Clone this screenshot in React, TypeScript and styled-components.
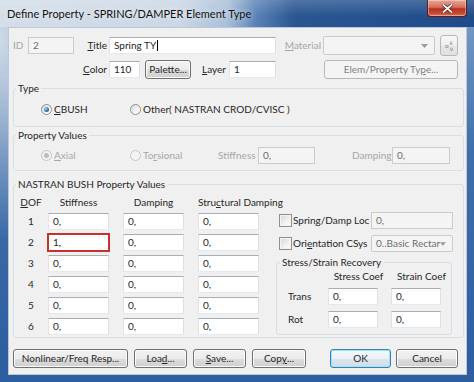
import styled, { createGlobalStyle, css } from 'styled-components';

const GlobalStyle = createGlobalStyle`
  html, body {
    margin: 0;
    padding: 0;
  }

  body {
    width: 474px;
    height: 382px;
    overflow: hidden;
    font-family: Lato, 'Noto Sans', sans-serif;
    font-size: 10px;
    line-height: 13px;
    color: #262626;
  }
`;

const DOF_ROWS = [
  { dof: '1', stiffness: '0,', damping: '0,', structural: '0,' },
  { dof: '2', stiffness: '1,', damping: '0,', structural: '0,', highlight: true },
  { dof: '3', stiffness: '0,', damping: '0,', structural: '0,' },
  { dof: '4', stiffness: '0,', damping: '0,', structural: '0,' },
  { dof: '5', stiffness: '0,', damping: '0,', structural: '0,' },
  { dof: '6', stiffness: '0,', damping: '0,', structural: '0,' },
];

const DropArrow = () => (
  <svg width="7" height="4" viewBox="0 0 7 4">
    <path d="M0 0h7L3.5 4z" fill="#9a9a9a" />
  </svg>
);

export default function App() {
  return (
    <>
      <GlobalStyle />
      <Window>
        <TitleBar>
          <TitleText>Define Property - SPRING/DAMPER Element Type</TitleText>
          <CloseButton>
            <svg width="11" height="9" viewBox="0 0 11 9">
              <path d="M1 0.5 L10 8.5 M10 0.5 L1 8.5" stroke="#4a1410" strokeWidth="3.2" />
              <path d="M1 0.5 L10 8.5 M10 0.5 L1 8.5" stroke="#ffffff" strokeWidth="1.8" />
            </svg>
          </CloseButton>
        </TitleBar>

        <Client>
          <Row>
            <Label $w={15} $disabled>ID</Label>
            <TextBox $w={46} $disabled>2</TextBox>
            <Label $w={35} $right>
              <u>T</u>itle
            </Label>
            <TextBox $w={167}>
              Spring TY<Caret />
            </TextBox>
            <Label $w={47} $right $disabled>
              <u>M</u>aterial
            </Label>
            <Select $w={112} $h={19} $disabled>
              <span />
              <DropArrow />
            </Select>
            <IconButton>
              <span className="dot">o</span>
              <span className="frac">
                <span>ε</span>
                <span>ν</span>
              </span>
            </IconButton>
          </Row>

          <Row $mt={5}>
            <Label $w={96} $right>
              <u>C</u>olor
            </Label>
            <TextBox $w={31}>110</TextBox>
            <Button $w={46} $ml={5}>
              Palette...
            </Button>
            <Label $w={38} $right $pr={3}>
              <u>L</u>ayer
            </Label>
            <TextBox $w={47}>1</TextBox>
            <Button $w={134} $ml={48} $disabled>
              Elem/Property Ty<u>p</u>e...
            </Button>
          </Row>

          <Group $mt={3} $pt={8} $pb={9}>
            <Legend>Type</Legend>
            <RadioRow $h={15}>
              <RadioItem $w={89}>
                <Radio $checked />
                <span>
                  <u>C</u>BUSH
                </span>
              </RadioItem>
              <RadioItem>
                <Radio />
                <span>Other( NASTRAN CROD/CVISC )</span>
              </RadioItem>
            </RadioRow>
          </Group>

          <Group $mt={2} $pt={6} $pb={6}>
            <Legend>Property Values</Legend>
            <RadioRow $h={17}>
              <RadioItem $w={89} $disabled>
                <Radio $checked $disabled />
                <span>
                  <u>A</u>xial
                </span>
              </RadioItem>
              <RadioItem $w={88} $disabled>
                <Radio $disabled />
                <span>
                  To<u>r</u>sional
                </span>
              </RadioItem>
              <Label $w={40} $disabled>
                Stiffness
              </Label>
              <TextBox $w={57} $disabled>
                0,
              </TextBox>
              <Label $w={40} $ml={37} $disabled>
                Dampin<u>g</u>
              </Label>
              <TextBox $w={58} $disabled>
                0,
              </TextBox>
            </RadioRow>
          </Group>

          <Group $mt={7} $pt={6} $pb={2}>
            <Legend>NASTRAN BUSH Property Values</Legend>
            <BushBody>
              <DofGrid>
                <HeadCell $center>
                  <u>D</u>OF
                </HeadCell>
                <HeadCell>Stiffness</HeadCell>
                <HeadCell>Damping</HeadCell>
                <HeadCell>
                  Stru<u>c</u>tural Damping
                </HeadCell>
                {DOF_ROWS.map((row) => (
                  <DofRow key={row.dof}>
                    <DofNumber>{row.dof}</DofNumber>
                    <TextBox $w={61} $highlight={row.highlight}>
                      {row.stiffness}
                    </TextBox>
                    <TextBox $w={61}>{row.damping}</TextBox>
                    <TextBox $w={61}>{row.structural}</TextBox>
                  </DofRow>
                ))}
              </DofGrid>

              <SideColumn>
                <CheckRow>
                  <Checkbox />
                  <Label $w={78}>
                    Sprin<u>g</u>/Damp Loc
                  </Label>
                  <TextBox $w={82} $disabled>
                    0,
                  </TextBox>
                </CheckRow>
                <CheckRow $mt={6}>
                  <Checkbox />
                  <Label $w={78}>
                    Ori<u>e</u>ntation CSys
                  </Label>
                  <Select $w={82} $h={17} $disabled>
                    <span>0..Basic Rectar</span>
                    <DropArrow />
                  </Select>
                </CheckRow>

                <Group $mt={4} $pt={3} $pb={6}>
                  <Legend $ml={3}>Stress/Strain Recovery</Legend>
                  <RecoveryGrid>
                    <span />
                    <HeadCell $w={50}>Stress Coef</HeadCell>
                    <HeadCell $w={50}>Strain Coef</HeadCell>
                    <span>Trans</span>
                    <TextBox $w={50}>0,</TextBox>
                    <TextBox $w={50}>0,</TextBox>
                    <span>Rot</span>
                    <TextBox $w={50}>0,</TextBox>
                    <TextBox $w={50}>0,</TextBox>
                  </RecoveryGrid>
                </Group>
              </SideColumn>
            </BushBody>
          </Group>

          <ButtonBar>
            <ButtonCluster $gap={6}>
              <Button $w={115}>Nonlinear/Freq Resp...</Button>
              <Button $w={53}>
                Loa<u>d</u>...
              </Button>
              <Button $w={53}>
                <u>S</u>ave...
              </Button>
              <Button $w={54}>
                Cop<u>y</u>...
              </Button>
            </ButtonCluster>
            <ButtonCluster $gap={5}>
              <Button $w={61} $default>
                OK
              </Button>
              <Button $w={62}>Cancel</Button>
            </ButtonCluster>
          </ButtonBar>
        </Client>
      </Window>
    </>
  );
}

const Window = styled.div`
  box-sizing: border-box;
  width: 474px;
  height: 382px;
  display: flex;
  flex-direction: column;
  padding: 0 7px 7px 8px;
  background:
    radial-gradient(ellipse 90px 200px at 0px 40px, #cdd9e6 0%, rgba(205, 217, 230, 0) 100%),
    linear-gradient(180deg, #7ea0c8 0%, #3f6ea9 40%, #2c5d9e 100%);
`;

const TitleBar = styled.div`
  height: 27px;
  margin: 0 -7px 0 -8px;
  padding-left: 7px;
  display: flex;
  align-items: center;
  background:
    linear-gradient(180deg, rgba(255, 255, 255, 0.18) 0%, rgba(255, 255, 255, 0) 60%),
    linear-gradient(90deg, #d4dee9 0%, #cbd7e5 38%, #a9bfd8 48%, #5a82b6 54%, #2a5692 62%, #1f4b8a 100%);
`;

const TitleText = styled.div`
  font-size: 11px;
  color: #111;
  text-shadow: 0 0 6px rgba(255, 255, 255, 0.9);
  white-space: nowrap;
`;

const CloseButton = styled.div`
  box-sizing: border-box;
  align-self: flex-start;
  margin-left: auto;
  margin-right: 7px;
  width: 40px;
  height: 17px;
  display: flex;
  align-items: center;
  justify-content: center;
  border: 1px solid #5b1e18;
  border-top: none;
  border-radius: 0 0 4px 4px;
  background: linear-gradient(180deg, #e8a597 0%, #d46f5e 45%, #b8321f 55%, #c84a35 85%, #dd7a5e 100%);
  box-shadow: inset 0 0 0 1px rgba(255, 255, 255, 0.35);
`;

const Client = styled.div`
  flex: 1;
  display: flex;
  flex-direction: column;
  padding: 8px 2px 0 4px;
  background: #f0f0f0;
  border: 1px solid #b8c9dd;
`;

const Row = styled.div<{ $mt?: number }>`
  height: 19px;
  margin-top: ${({ $mt }) => $mt ?? 0}px;
  display: flex;
  align-items: center;
`;

const Label = styled.span<{
  $w: number;
  $right?: boolean;
  $disabled?: boolean;
  $pr?: number;
  $ml?: number;
}>`
  box-sizing: border-box;
  flex: none;
  width: ${({ $w }) => $w}px;
  margin-left: ${({ $ml }) => $ml ?? 0}px;
  padding-right: ${({ $right, $pr }) => ($pr ?? ($right ? 2 : 0))}px;
  text-align: ${({ $right }) => ($right ? 'right' : 'left')};
  white-space: nowrap;
  color: ${({ $disabled }) => ($disabled ? '#a6a6a6' : 'inherit')};

  u {
    text-underline-offset: 1px;
  }
`;

const TextBox = styled.div<{ $w: number; $disabled?: boolean; $highlight?: boolean }>`
  box-sizing: border-box;
  flex: none;
  width: ${({ $w }) => $w}px;
  height: 17px;
  display: flex;
  align-items: center;
  padding-left: 4px;
  background: #fff;
  border: 1px solid;
  border-color: #abadb3 #dbdfe6 #e3e9ef #e2e3ea;
  white-space: nowrap;
  overflow: hidden;

  ${({ $disabled }) =>
    $disabled &&
    css`
      background: #f4f4f4;
      border-color: #c9cbcd;
      color: #6d6d6d;
    `}

  ${({ $highlight }) =>
    $highlight &&
    css`
      border-color: #c8302c;
      box-shadow: 0 0 0 1px #c8302c;
    `}
`;

const Caret = styled.span`
  width: 1px;
  height: 11px;
  margin-left: 1px;
  background: #000;
`;

const Select = styled.div<{ $w: number; $h: number; $disabled?: boolean }>`
  box-sizing: border-box;
  flex: none;
  width: ${({ $w }) => $w}px;
  height: ${({ $h }) => $h}px;
  display: flex;
  align-items: center;
  justify-content: space-between;
  padding: 0 6px 0 4px;
  border: 1px solid ${({ $disabled }) => ($disabled ? '#c9cbcd' : '#707070')};
  border-radius: 2px;
  background: ${({ $disabled }) => ($disabled ? '#f4f4f4' : '#fff')};
  color: ${({ $disabled }) => ($disabled ? '#6d6d6d' : '#000')};
  white-space: nowrap;
  overflow: hidden;
`;

const IconButton = styled.div`
  box-sizing: border-box;
  flex: none;
  width: 18px;
  height: 21px;
  margin-left: 5px;
  display: flex;
  align-items: center;
  justify-content: center;
  gap: 1px;
  border: 1px solid #b5b9bd;
  border-radius: 3px;
  background: linear-gradient(180deg, #f7f7f7 0%, #efefef 50%, #e6e6e6 50%, #e0e0e0 100%);
  color: #7d7d7d;
  font-family: 'DejaVu Sans', sans-serif;

  .dot {
    font-size: 6px;
    line-height: 6px;
  }

  .frac {
    display: flex;
    flex-direction: column;
    font-size: 6px;
    line-height: 6px;
  }
`;

const Button = styled.div<{
  $w: number;
  $ml?: number;
  $default?: boolean;
  $disabled?: boolean;
}>`
  box-sizing: border-box;
  flex: none;
  width: ${({ $w }) => $w}px;
  height: 19px;
  margin-left: ${({ $ml }) => $ml ?? 0}px;
  display: flex;
  align-items: center;
  justify-content: center;
  white-space: nowrap;
  border: 1px solid #707070;
  border-radius: 3px;
  background: linear-gradient(180deg, #f2f2f2 0%, #ebebeb 50%, #dddddd 50%, #cfcfcf 100%);
  box-shadow: inset 0 0 0 1px #fbfbfb;

  u {
    text-underline-offset: 1px;
  }

  ${({ $default }) =>
    $default &&
    css`
      border-color: #3c7fb1;
      box-shadow: inset 0 0 0 1px #9fe3fb;
      background: linear-gradient(180deg, #f3f8fb 0%, #eaf1f6 50%, #dbe6ee 50%, #d1dfe9 100%);
    `}

  ${({ $disabled }) =>
    $disabled &&
    css`
      border-color: #b5b9bd;
      background: #f4f4f4;
      box-shadow: none;
      color: #838383;
    `}
`;

const Group = styled.fieldset<{ $mt: number; $pt: number; $pb: number }>`
  margin: ${({ $mt }) => $mt}px 0 0 0;
  min-width: 0;
  padding: ${({ $pt }) => $pt}px 0 ${({ $pb }) => $pb}px 0;
  border: 1px solid #d5dfe5;
  border-radius: 3px;
`;

const Legend = styled.legend<{ $ml?: number }>`
  margin-left: ${({ $ml }) => $ml ?? 2}px;
  padding: 0 2px;
  line-height: 12px;
  font-size: 10px;
`;

const RadioRow = styled.div<{ $h: number }>`
  height: ${({ $h }) => $h}px;
  padding-left: 27px;
  display: flex;
  align-items: center;
`;

const RadioItem = styled.div<{ $w?: number; $disabled?: boolean }>`
  flex: none;
  width: ${({ $w }) => ($w ? `${$w}px` : 'auto')};
  display: flex;
  align-items: center;
  gap: 2px;
  white-space: nowrap;
  color: ${({ $disabled }) => ($disabled ? '#a6a6a6' : 'inherit')};

  u {
    text-underline-offset: 1px;
  }
`;

const Radio = styled.span<{ $checked?: boolean; $disabled?: boolean }>`
  box-sizing: border-box;
  flex: none;
  width: 11px;
  height: 11px;
  display: flex;
  align-items: center;
  justify-content: center;
  border-radius: 50%;
  border: 1px solid ${({ $disabled }) => ($disabled ? '#c4c6c8' : '#8e8f8f')};
  background: ${({ $disabled }) =>
    $disabled ? '#f3f3f3' : 'linear-gradient(135deg, #d8d8d8 0%, #f6f6f6 60%, #ffffff 100%)'};

  &::after {
    content: '';
    display: ${({ $checked }) => ($checked ? 'block' : 'none')};
    width: 5px;
    height: 5px;
    border-radius: 50%;
    background: ${({ $disabled }) =>
      $disabled ? '#bdbdbd' : 'radial-gradient(circle at 35% 35%, #a6dcf8 0%, #2e6fb0 55%, #173f70 100%)'};
  }
`;

const BushBody = styled.div`
  display: flex;
  align-items: flex-start;
`;

const DofGrid = styled.div`
  display: grid;
  grid-template-columns: 34px 75px 75px 61px;
  grid-template-rows: 13px repeat(6, 17px);
  row-gap: 4px;
  align-items: center;
`;

const DofRow = styled.div`
  display: contents;
`;

const HeadCell = styled.span<{ $center?: boolean; $w?: number }>`
  width: ${({ $w }) => ($w ? `${$w}px` : 'auto')};
  max-width: 61px;
  text-align: center;
  white-space: nowrap;
  ${({ $center }) => !$center && css`width: 61px; overflow: visible;`}

  u {
    text-underline-offset: 1px;
  }
`;

const DofNumber = styled.span`
  text-align: center;
`;

const SideColumn = styled.div`
  width: 176px;
  margin-left: 17px;
  padding-top: 16px;
  display: flex;
  flex-direction: column;
`;

const CheckRow = styled.div<{ $mt?: number }>`
  height: 17px;
  margin-top: ${({ $mt }) => $mt ?? 0}px;
  padding-left: 3px;
  display: flex;
  align-items: center;
`;

const Checkbox = styled.span`
  box-sizing: border-box;
  flex: none;
  width: 13px;
  height: 13px;
  margin-right: 1px;
  border: 1px solid #8e8f8f;
  background: linear-gradient(135deg, #d6d6d6 0%, #f2f2f2 60%, #ffffff 100%);
  box-shadow: inset 0 0 0 1px #f4f4f4;
`;

const RecoveryGrid = styled.div`
  display: grid;
  grid-template-columns: 27px 50px 50px;
  grid-template-rows: 11px 17px 17px;
  column-gap: 13px;
  row-gap: 6px;
  align-items: center;
  padding-left: 11px;
  white-space: nowrap;
`;

const ButtonBar = styled.div`
  margin-top: 11px;
  padding-right: 6px;
  display: flex;
  justify-content: space-between;
`;

const ButtonCluster = styled.div<{ $gap: number }>`
  display: flex;
  gap: ${({ $gap }) => $gap}px;
`;
